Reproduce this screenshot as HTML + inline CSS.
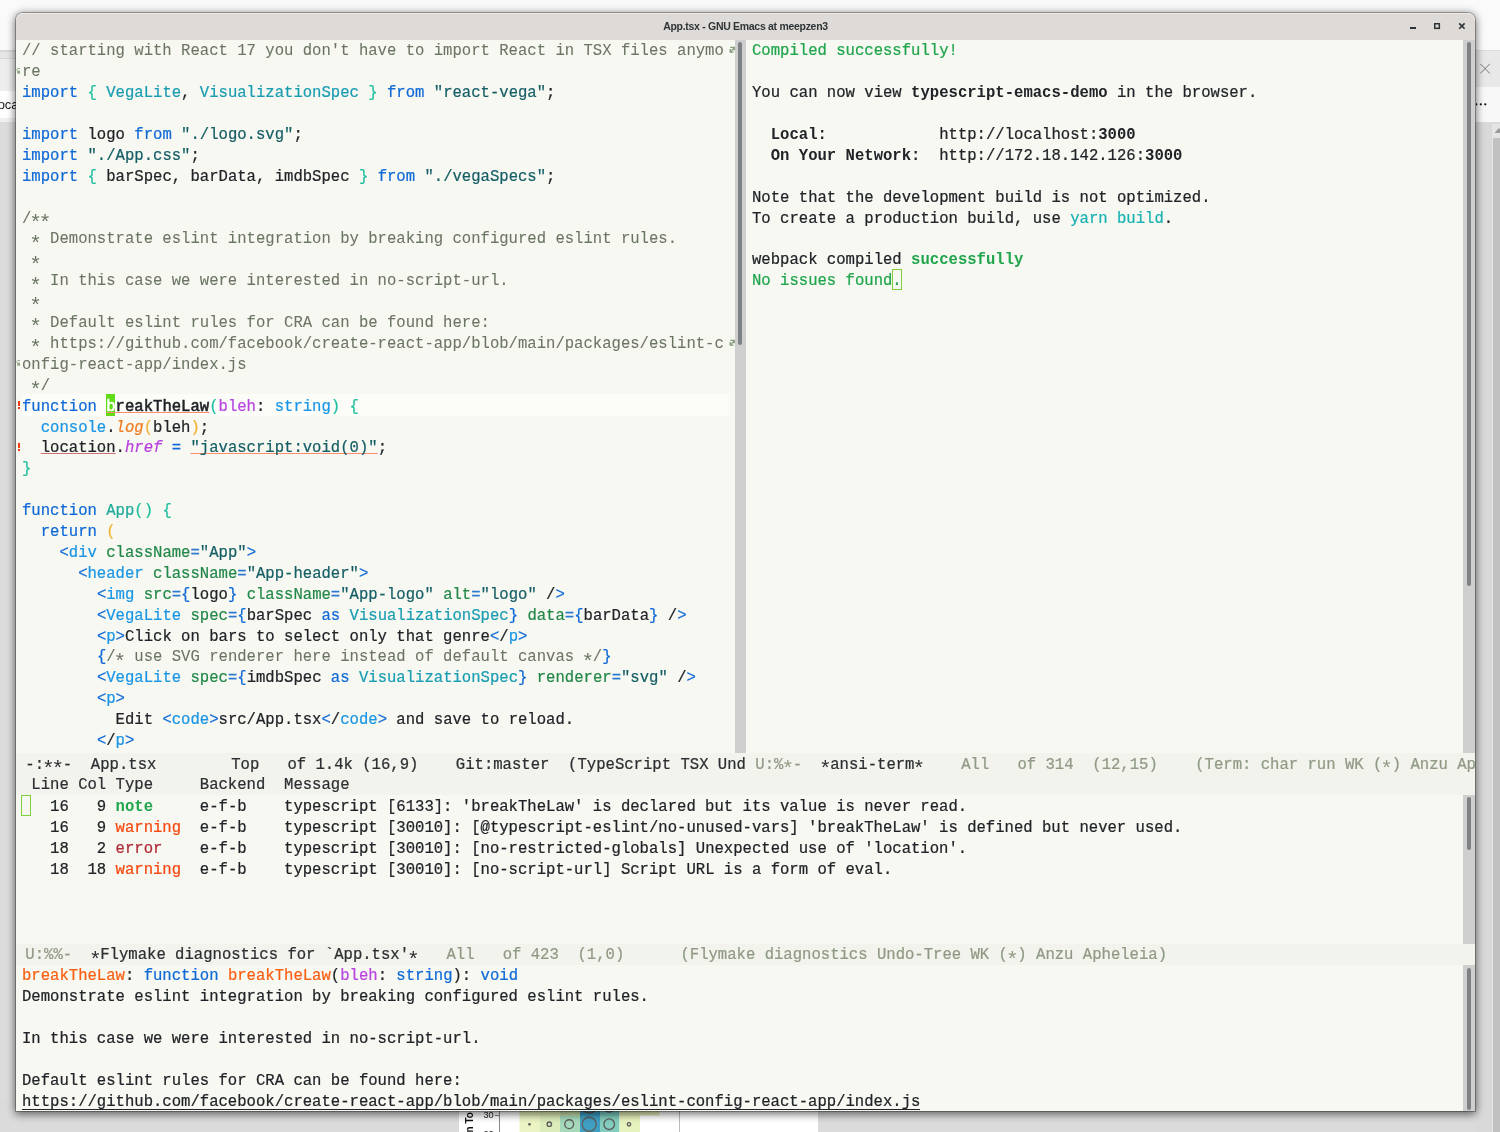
<!DOCTYPE html>
<html lang="en">
<head>
<meta charset="utf-8">
<title>App.tsx - GNU Emacs at meepzen3</title>
<style>
html,body{margin:0;padding:0;}
body{width:1500px;height:1132px;position:relative;overflow:hidden;background:#f6f6f6;font-family:"Liberation Sans",sans-serif;}
.abs{position:absolute;}
#root{position:absolute;left:0;top:0;width:1500px;height:1132px;overflow:hidden;will-change:transform;}
/* background desktop pieces */
#bgtop{left:0;top:0;width:1500px;height:50px;background:#fafafa;}
#bgl1{left:0;top:50px;width:20px;height:41px;background:#eeeeee;border-top:2px solid #d9d9d9;box-sizing:border-box;}
#bgl2{left:0;top:91px;width:20px;height:27px;background:#fff;}
#bgl3{left:0;top:118px;width:20px;height:4px;background:#f0f0f0;}
#bgl4{left:0;top:122px;width:20px;height:1010px;background:#dcdcdc;}
#bgr1{left:1470px;top:50px;width:30px;height:37px;background:#e8e8e8;border-top:1px solid #dcdcdc;box-sizing:border-box;}
#bgr2{left:1470px;top:87px;width:30px;height:35px;background:#f8f8f8;}
#bgr3{left:1470px;top:122px;width:30px;height:1010px;background:#d9d9d9;}
#bgr4{left:1492px;top:124px;width:8px;height:1008px;background:#e4e4e4;}
#bgr5{left:1493px;top:138px;width:7px;height:994px;background:#c1c1c1;}
#bgb{left:0;top:1100px;width:1475px;height:32px;background:#dbdbdb;}
#chart{left:459px;top:1100px;width:359px;height:32px;background:#fff;}
#bgl1b{left:0;top:52px;width:20px;height:5.5px;background:#e6e6e6;border-bottom:1px solid #d8d8d8;}
#oca{left:-2.2px;top:90.6px;height:27px;line-height:27px;font-size:13px;color:#1a1a1a;letter-spacing:-0.2px;}
.fr{position:absolute;background:#8fa585;}
.ex{position:absolute;width:2.1px;background:#f03a10;}
/* emacs window */
#win{left:16px;top:13px;width:1459px;height:1098.3px;background:#f8f8f2;border-radius:7px 7px 0 0;
 box-shadow:0 0 0 1px rgba(0,0,0,0.27),0 1px 8px 1px rgba(0,0,0,0.42),0 4px 8px 0 rgba(0,0,0,0.26);}
#tb{left:16px;top:13px;width:1459px;height:26.6px;background:#dedad7;border-radius:7px 7px 0 0;box-shadow:inset 0 1px 0 #eceae8;}
#title{left:16px;top:12px;width:1459px;height:28px;line-height:28px;text-align:center;font-size:10.5px;font-weight:bold;color:#2e3436;letter-spacing:-0.3px;}
/* text */
.l{position:absolute;white-space:pre;-webkit-text-stroke:0.22px currentColor;font-family:"Liberation Mono",monospace;font-size:15.601px;line-height:20.9px;height:20.9px;color:#202428;overflow:hidden;padding-top:1.65px;box-sizing:border-box;}
.hl{position:absolute;background:#fcfcf9;}
.hl2{position:absolute;background:#fafaf6;}
.ml{position:absolute;background:#f3f3ee;}
.mt{color:#2b2f31;}
.mi{color:#8f9a84;}
.tr{position:absolute;background:#cfcfcf;}
.th{position:absolute;width:4.2px;background:#7d8183;border-radius:2.1px;}
.as{display:inline-block;width:12.6px;margin:0 -1.24px 0 -2px;font-size:21px;line-height:0;position:relative;top:6.3px;-webkit-text-stroke:0;}
.k{color:#0f6ad6;}
.b{color:#1fbf9f;}
.t{color:#1a9db2;}
.s{color:#155e66;}
.c{color:#6b7564;-webkit-text-stroke:0.08px currentColor;}
.p{color:#b846e0;}
.ty{color:#1a96e6;}
.fn{color:#f07a1e;font-style:italic;}
.pr{color:#b83fe0;font-style:italic;}
.y{color:#f2b338;}
.at{color:#23884a;}
.eq{color:#2a78cf;}
.fa{color:#1fab9b;}
.g{color:#1fa54c;}
.bd{font-weight:bold;-webkit-text-stroke:0;}
.cy{color:#18b2b2;}
.sb{-webkit-text-stroke:0.55px currentColor;}
.wa{color:#f8470f;}
.er{color:#b02a37;}
.or{color:#f95f12;}
.ul{text-decoration:underline;text-decoration-thickness:1.2px;text-underline-offset:2.9px;text-decoration-skip-ink:none;}
.uw{text-decoration:underline;text-decoration-color:#fa8d6c;text-decoration-thickness:1.1px;text-underline-offset:1.0px;text-decoration-skip-ink:none;}
.ue{text-decoration:underline;text-decoration-color:#cf7079;text-decoration-thickness:1.1px;text-underline-offset:1.0px;text-decoration-skip-ink:none;}
.cur{color:#fff;}
.scur{position:absolute;background:#60dc16;}
.hc{outline:1px solid #86cf4a;outline-offset:-1px;}
.hcur{position:absolute;border:1px solid #7ed03c;box-sizing:border-box;}
</style>
</head>
<body>
<div id="root">
<div class="abs" id="bgtop"></div>
<div class="abs" id="bgl1"></div><div class="abs" id="bgl1b"></div><div class="abs" id="bgl2"></div><div class="abs" id="bgl3"></div><div class="abs" id="bgl4"></div>
<div class="abs" id="oca">oca</div>
<div class="abs" id="bgr1"></div><div class="abs" id="bgr2"></div><div class="abs" id="bgr3"></div><div class="abs" id="bgr4"></div><div class="abs" id="bgr5"></div>
<svg class="abs" style="left:1476px;top:60px" width="24" height="60" viewBox="0 0 24 60">
<path d="M4.3 3.8 L13.9 13.5 M13.9 3.8 L4.3 13.5" stroke="#7a7a7a" stroke-width="1" fill="none"/>
<circle cx="0.3" cy="44.3" r="1.1" fill="#111"/><circle cx="4.8" cy="44.3" r="1.1" fill="#111"/><circle cx="9.3" cy="44.3" r="1.1" fill="#111"/>
</svg>
<svg class="abs" style="left:1492px;top:124px" width="8" height="14" viewBox="0 0 8 14"><path d="M2.6 9 L8 9 L8 4.5 L6.3 4.5 Z" fill="#9a9a9a"/></svg>
<div class="abs" id="bgb"></div>
<div class="abs" id="chart">
<svg width="359" height="32" viewBox="459 1100 359 32" style="position:absolute;left:0;top:0">
<rect x="519.5" y="1100" width="20.5" height="16" fill="#e1ecb6"/><rect x="519.5" y="1116" width="20.5" height="16" fill="#ebf4c2"/>
<rect x="540" y="1100" width="20" height="16" fill="#dbe8b1"/><rect x="540" y="1116" width="20" height="16" fill="#dcedb9"/>
<rect x="560" y="1100" width="20" height="16" fill="#c3dcaa"/><rect x="560" y="1116" width="20" height="16" fill="#a6d9ba"/>
<rect x="580" y="1100" width="20" height="16" fill="#3a98be"/><rect x="580" y="1116" width="20" height="16" fill="#40a0c4"/>
<rect x="600" y="1100" width="19.5" height="16" fill="#78c6bc"/><rect x="600" y="1116" width="19.5" height="16" fill="#82cdbd"/>
<rect x="619.5" y="1100" width="20.5" height="16" fill="#dfeab4"/><rect x="619.5" y="1116" width="20.5" height="16" fill="#e7f3bf"/>
<rect x="640" y="1100" width="19.5" height="15.5" fill="#e3ecb8"/>
<g fill="none" stroke="#5e5e5e" stroke-width="1.4">
<circle cx="529.5" cy="1124.3" r="0.7" fill="#666"/>
<circle cx="549.3" cy="1124.2" r="2.2"/>
<circle cx="569.2" cy="1124.2" r="4.4"/>
<circle cx="589.2" cy="1124.2" r="7"/>
<circle cx="609.2" cy="1124.2" r="5.3"/>
<circle cx="629" cy="1124.3" r="1.7"/>
<circle cx="589.2" cy="1105" r="8"/>
<circle cx="609.2" cy="1106" r="6"/>
</g>
<path d="M499.5 1100 V1132 M495 1115.5 H499.5" stroke="#888" stroke-width="1" fill="none"/>
<path d="M679.5 1100 V1132" stroke="#bbb" stroke-width="1" fill="none"/>
<text x="483.5" y="1117.8" font-family="Liberation Sans, sans-serif" font-size="9.2" fill="#222">30</text>
<text x="483.5" y="1137" font-family="Liberation Sans, sans-serif" font-size="9.2" fill="#222">20</text>
<text transform="translate(473.3 1132.5) rotate(-90)" font-family="Liberation Sans, sans-serif" font-size="10" font-weight="bold" fill="#111">n To</text>
</svg>
</div>
<div class="abs" id="win"></div>
<div class="abs" id="tb"></div>
<div class="abs" id="title">App.tsx - GNU Emacs at meepzen3</div>
<svg class="abs" style="left:1404px;top:18px" width="68" height="16" viewBox="1404 18 68 16">
<rect x="1410" y="27" width="6" height="2" fill="#2e3436"/>
<rect x="1434.75" y="23.75" width="4.6" height="4.6" fill="none" stroke="#2e3436" stroke-width="1.5"/>
<path d="M1459.2 23.4 L1464.6 28.8 M1464.6 23.4 L1459.2 28.8" stroke="#2e3436" stroke-width="1.6" fill="none"/>
</svg>
<div class="hl" style="left:21.5px;top:394.45px;width:707.5px;height:21.10px"></div>
<div class="scur" style="left:106.1px;top:394.45px;width:8.9px;height:21.10px"></div>
<div class="ml" style="left:16px;top:752.80px;width:1459px;height:42.00px"></div>
<div class="ml" style="left:16px;top:943.60px;width:1459px;height:21.40px"></div>
<div class="tr" style="left:734.7px;top:39.5px;width:11.2px;height:713.3px"></div><div class="th" style="left:738.3px;top:42.0px;height:303.0px"></div>
<div class="tr" style="left:1463.2px;top:39.5px;width:11.8px;height:713.3px"></div><div class="th" style="left:1466.8px;top:42.4px;height:543.6px"></div>
<div class="tr" style="left:1463.2px;top:794.8px;width:11.8px;height:148.8px"></div><div class="th" style="left:1466.8px;top:797.0px;height:53.2px"></div>
<div class="tr" style="left:1463.2px;top:965.0px;width:11.8px;height:146.3px"></div><div class="th" style="left:1466.8px;top:968.0px;height:141.5px"></div>
<div class="l " style="left:22.00px;top:39.75px;"><span class="c">// starting with React 17 you don't have to import React in TSX files anymo</span></div>
<div class="l " style="left:22.00px;top:60.65px;"><span class="c">re</span></div>
<div class="l " style="left:22.00px;top:81.55px;"><span class="k">import</span> <span class="b">{</span> <span class="t">VegaLite</span>, <span class="t">VisualizationSpec</span> <span class="b">}</span> <span class="k">from</span> <span class="s">"react-vega"</span>;</div>
<div class="l " style="left:22.00px;top:123.35px;"><span class="k">import</span> logo <span class="k">from</span> <span class="s">"./logo.svg"</span>;</div>
<div class="l " style="left:22.00px;top:144.25px;"><span class="k">import</span> <span class="s">"./App.css"</span>;</div>
<div class="l " style="left:22.00px;top:165.15px;"><span class="k">import</span> <span class="b">{</span> barSpec, barData, imdbSpec <span class="b">}</span> <span class="k">from</span> <span class="s">"./vegaSpecs"</span>;</div>
<div class="l " style="left:22.00px;top:206.95px;"><span class="c">/<span class="as">*</span><span class="as">*</span></span></div>
<div class="l " style="left:22.00px;top:227.85px;"><span class="c"> <span class="as">*</span> Demonstrate eslint integration by breaking configured eslint rules.</span></div>
<div class="l " style="left:22.00px;top:248.75px;"><span class="c"> <span class="as">*</span></span></div>
<div class="l " style="left:22.00px;top:269.65px;"><span class="c"> <span class="as">*</span> In this case we were interested in no-script-url.</span></div>
<div class="l " style="left:22.00px;top:290.55px;"><span class="c"> <span class="as">*</span></span></div>
<div class="l " style="left:22.00px;top:311.45px;"><span class="c"> <span class="as">*</span> Default eslint rules for CRA can be found here:</span></div>
<div class="l " style="left:22.00px;top:332.35px;"><span class="c"> <span class="as">*</span> https://github.com/facebook/create-react-app/blob/main/packages/eslint-c</span></div>
<div class="l " style="left:22.00px;top:353.25px;"><span class="c">onfig-react-app/index.js</span></div>
<div class="l " style="left:22.00px;top:374.15px;"><span class="c"> <span class="as">*</span>/</span></div>
<div class="l " style="left:22.00px;top:395.05px;"><span class="k">function</span> <span class="cur sb uw">b</span><span class="uw sb">reakTheLaw</span><span class="b">(</span><span class="p">bleh</span>: <span class="ty">string</span><span class="b">)</span> <span class="b">{</span></div>
<div class="l " style="left:22.00px;top:415.95px;">  <span class="ty">console</span>.<span class="fn">log</span><span class="y">(</span>bleh<span class="y">)</span>;</div>
<div class="l " style="left:22.00px;top:436.85px;">  <span class="ue">location</span>.<span class="pr">href</span> <span class="k">=</span> <span class="s uw">"javascript:void(0)"</span>;</div>
<div class="l " style="left:22.00px;top:457.75px;"><span class="b">}</span></div>
<div class="l " style="left:22.00px;top:499.55px;"><span class="k">function</span> <span class="fa">App</span><span class="b">()</span> <span class="b">{</span></div>
<div class="l " style="left:22.00px;top:520.45px;">  <span class="k">return</span> <span class="y">(</span></div>
<div class="l " style="left:22.00px;top:541.35px;">    <span class="k">&lt;</span><span class="ty">div</span> <span class="at">className</span><span class="eq">=</span><span class="s">"App"</span><span class="k">&gt;</span></div>
<div class="l " style="left:22.00px;top:562.25px;">      <span class="k">&lt;</span><span class="ty">header</span> <span class="at">className</span><span class="eq">=</span><span class="s">"App-header"</span><span class="k">&gt;</span></div>
<div class="l " style="left:22.00px;top:583.15px;">        <span class="k">&lt;</span><span class="ty">img</span> <span class="at">src</span><span class="eq">=</span><span class="k">{</span>logo<span class="k">}</span> <span class="at">className</span><span class="eq">=</span><span class="s">"App-logo"</span> <span class="at">alt</span><span class="eq">=</span><span class="s">"logo"</span> /<span class="k">&gt;</span></div>
<div class="l " style="left:22.00px;top:604.05px;">        <span class="k">&lt;</span><span class="ty">VegaLite</span> <span class="at">spec</span><span class="eq">=</span><span class="k">{</span>barSpec <span class="k">as</span> <span class="t">VisualizationSpec</span><span class="k">}</span> <span class="at">data</span><span class="eq">=</span><span class="k">{</span>barData<span class="k">}</span> /<span class="k">&gt;</span></div>
<div class="l " style="left:22.00px;top:624.95px;">        <span class="k">&lt;</span><span class="ty">p</span><span class="k">&gt;</span>Click on bars to select only that genre<span class="k">&lt;</span>/<span class="ty">p</span><span class="k">&gt;</span></div>
<div class="l " style="left:22.00px;top:645.85px;">        <span class="k">{</span><span class="c">/<span class="as">*</span> use SVG renderer here instead of default canvas <span class="as">*</span>/</span><span class="k">}</span></div>
<div class="l " style="left:22.00px;top:666.75px;">        <span class="k">&lt;</span><span class="ty">VegaLite</span> <span class="at">spec</span><span class="eq">=</span><span class="k">{</span>imdbSpec <span class="k">as</span> <span class="t">VisualizationSpec</span><span class="k">}</span> <span class="at">renderer</span><span class="eq">=</span><span class="s">"svg"</span> /<span class="k">&gt;</span></div>
<div class="l " style="left:22.00px;top:687.65px;">        <span class="k">&lt;</span><span class="ty">p</span><span class="k">&gt;</span></div>
<div class="l " style="left:22.00px;top:708.55px;">          Edit <span class="k">&lt;</span><span class="ty">code</span><span class="k">&gt;</span>src/App.tsx<span class="k">&lt;</span>/<span class="ty">code</span><span class="k">&gt;</span> and save to reload.</div>
<div class="l " style="left:22.00px;top:729.45px;">        <span class="k">&lt;</span>/<span class="ty">p</span><span class="k">&gt;</span></div>
<div class="l " style="left:752.00px;top:39.75px;"><span class="g">Compiled successfully!</span></div>
<div class="l " style="left:752.00px;top:81.55px;">You can now view <span class="bd">typescript-emacs-demo</span> in the browser.</div>
<div class="l " style="left:752.00px;top:123.35px;">  <span class="bd">Local:</span>            http://localhost:<span class="bd">3000</span></div>
<div class="l " style="left:752.00px;top:144.25px;">  <span class="bd">On Your Network:</span>  http://172.18.142.126:<span class="bd">3000</span></div>
<div class="l " style="left:752.00px;top:186.05px;">Note that the development build is not optimized.</div>
<div class="l " style="left:752.00px;top:206.95px;">To create a production build, use <span class="cy">yarn build</span>.</div>
<div class="l " style="left:752.00px;top:248.75px;">webpack compiled <span class="g bd">successfully</span></div>
<div class="l " style="left:752.00px;top:269.65px;"><span class="g">No issues found.</span></div>
<div class="l mt" style="left:16.00px;top:753.35px;width:729.70px;"> -:<span class="as">*</span><span class="as">*</span>-  App.tsx        Top   of 1.4k (16,9)    Git:master  (TypeScript TSX Und</div>
<div class="l mt" style="left:746.00px;top:753.35px;width:729.00px;"><span class="mi"> U:%<span class="as">*</span>-  </span><span class="as">*</span>ansi-term<span class="as">*</span><span class="mi">    All   of 314  (12,15)    (Term: char run WK (<span class="as">*</span>) Anzu Ap</span></div>
<div class="l mt" style="left:22.00px;top:773.75px;"> Line Col Type     Backend  Message</div>
<div class="l " style="left:22.00px;top:795.35px;">   16   9 <span class="g bd">note</span>     e-f-b    typescript [6133]: 'breakTheLaw' is declared but its value is never read.</div>
<div class="l " style="left:22.00px;top:816.25px;">   16   9 <span class="wa">warning</span>  e-f-b    typescript [30010]: [@typescript-eslint/no-unused-vars] 'breakTheLaw' is defined but never used.</div>
<div class="l " style="left:22.00px;top:837.15px;">   18   2 <span class="er">error</span>    e-f-b    typescript [30010]: [no-restricted-globals] Unexpected use of 'location'.</div>
<div class="l " style="left:22.00px;top:858.05px;">   18  18 <span class="wa">warning</span>  e-f-b    typescript [30010]: [no-script-url] Script URL is a form of eval.</div>
<div class="l mt" style="left:16.00px;top:943.85px;"><span class="mi"> U:%%-  </span><span class="as">*</span>Flymake diagnostics for `App.tsx'<span class="as">*</span><span class="mi">   All   of 423  (1,0)      (Flymake diagnostics Undo-Tree WK (<span class="as">*</span>) Anzu Apheleia)</span></div>
<div class="l " style="left:22.00px;top:964.55px;"><span class="or">breakTheLaw</span>: <span class="k">function</span> <span class="or">breakTheLaw</span>(<span class="p">bleh</span>: <span class="k">string</span>): <span class="k">void</span></div>
<div class="l " style="left:22.00px;top:985.45px;">Demonstrate eslint integration by breaking configured eslint rules.</div>
<div class="l " style="left:22.00px;top:1027.25px;">In this case we were interested in no-script-url.</div>
<div class="l " style="left:22.00px;top:1069.05px;">Default eslint rules for CRA can be found here:</div>
<div class="l " style="left:22.00px;top:1089.95px;"><span class="ul">https://github.com/facebook/create-react-app/blob/main/packages/eslint-config-react-app/index.js</span></div>
<div class="hcur" style="left:892px;top:269.1px;width:9.7px;height:20.5px"></div>
<div class="hcur" style="left:21.2px;top:795.40px;width:9.8px;height:20.40px"></div>
<svg class="abs" style="left:729px;top:45.95px" width="7" height="8" viewBox="0 0 7 8"><path d="M1.2 1.3 H5.3 V4.2 M5.3 2 L1.6 5.6 M1.2 3 V6.2 H4.6" stroke="#869c7c" stroke-width="1.3" fill="none"/></svg>
<svg class="abs" style="left:729px;top:338.55px" width="7" height="8" viewBox="0 0 7 8"><path d="M1.2 1.3 H5.3 V4.2 M5.3 2 L1.6 5.6 M1.2 3 V6.2 H4.6" stroke="#869c7c" stroke-width="1.3" fill="none"/></svg>
<svg class="abs" style="left:16px;top:67.85px" width="5" height="7" viewBox="0 0 5 7"><path d="M1.3 0.6 H4 M0 1.2 L2 3.2" stroke="#8fa585" stroke-width="1" fill="none"/><rect x="1.3" y="2.7" width="2.7" height="3" fill="#8fa585"/></svg>
<svg class="abs" style="left:16px;top:360.45px" width="5" height="7" viewBox="0 0 5 7"><path d="M1.3 0.6 H4 M0 1.2 L2 3.2" stroke="#8fa585" stroke-width="1" fill="none"/><rect x="1.3" y="2.7" width="2.7" height="3" fill="#8fa585"/></svg>
<div class="ex" style="left:17.7px;top:400.75px;height:5.2px"></div><div class="ex" style="left:17.7px;top:406.85px;height:1.9px"></div>
<div class="ex" style="left:17.7px;top:442.55px;height:5.2px"></div><div class="ex" style="left:17.7px;top:448.65px;height:1.9px"></div>
</div>
</body>
</html>
